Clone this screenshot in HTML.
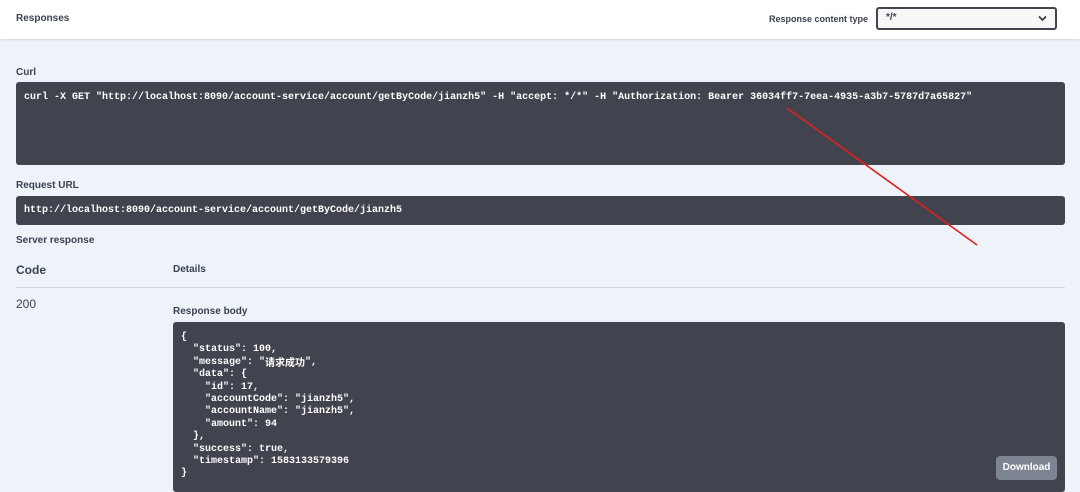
<!DOCTYPE html>
<html><head><meta charset="utf-8"><style>
*{margin:0;padding:0;box-sizing:border-box}
body{width:1080px;height:488px;overflow:hidden;background:#edf3f9;font-family:"Liberation Sans","Noto Sans CJK SC",sans-serif;color:#3b4151;position:relative}
.hdr{position:absolute;left:0;top:0;width:1080px;height:39px;background:#fff;box-shadow:0 1px 2px rgba(0,0,0,.12)}
.lbl{position:absolute;font-size:10px;font-weight:bold;color:#3b4151}
.box{position:absolute;background:#41444e;border-radius:3px;color:#fff;font-family:"Liberation Mono","Noto Sans CJK SC",monospace;font-size:10px;font-weight:bold;white-space:pre;line-height:12.2px}
.sel{position:absolute;left:876px;top:7px;width:181px;height:23px;border:2px solid #41444e;border-radius:3px;background:#f7f7f7;font-size:10px;padding:3px 8px;font-weight:bold}
.cjk{font-family:"Noto Sans CJK SC",sans-serif;line-height:10px;display:inline-block;height:11px;vertical-align:top;font-size:10px}
</style></head><body>
<div class="hdr"></div>
<div class="lbl" style="left:16px;top:13px">Responses</div>
<div class="lbl" style="left:769px;top:14px;font-size:9px">Response content type</div>
<div class="sel">*/*<svg style="position:absolute;right:8px;top:6px" width="9" height="7" viewBox="0 0 9 7"><path d="M1 1.5L4.5 5L8 1.5" stroke="#333" stroke-width="1.6" fill="none"/></svg></div>
<div class="lbl" style="left:16px;top:67px">Curl</div>
<div class="box" style="left:16px;top:82px;width:1049px;height:83px;padding:10px 8px">curl -X GET "http://localhost:8090/account-service/account/getByCode/jianzh5" -H "accept: */*" -H "Authorization: Bearer 36034ff7-7eea-4935-a3b7-5787d7a65827"</div>
<div class="lbl" style="left:16px;top:180px">Request URL</div>
<div class="box" style="left:16px;top:196px;width:1049px;height:29px;padding:9px 8px">http://localhost:8090/account-service/account/getByCode/jianzh5</div>
<div class="lbl" style="left:16px;top:235px">Server response</div>
<div class="lbl" style="left:16px;top:263px;font-size:12px">Code</div>
<div class="lbl" style="left:173px;top:264px">Details</div>
<div style="position:absolute;left:16px;top:287px;width:1049px;height:1px;background:#cfd5dc"></div>
<div style="position:absolute;left:16px;top:297px;font-size:12px;color:#3b4151">200</div>
<div class="lbl" style="left:173px;top:306px">Response body</div>
<div class="box" style="left:173px;top:322px;width:892px;height:170px;padding:10px 8px;line-height:12.4px">{
  "status": 100,
  "message": "<span class="cjk">请求成功</span>",
  "data": {
    "id": 17,
    "accountCode": "jianzh5",
    "accountName": "jianzh5",
    "amount": 94
  },
  "success": true,
  "timestamp": 1583133579396
}</div>
<div style="position:absolute;left:996px;top:456px;width:61px;height:24px;background:#7d8492;border-radius:4px;color:#fff;font-size:10px;font-weight:bold;text-align:center;line-height:24px">Download</div>
<svg style="position:absolute;left:0;top:0" width="1080" height="488"><line x1="787" y1="108" x2="977" y2="245" stroke="#e0201c" stroke-width="1.6"/></svg>
</body></html>
